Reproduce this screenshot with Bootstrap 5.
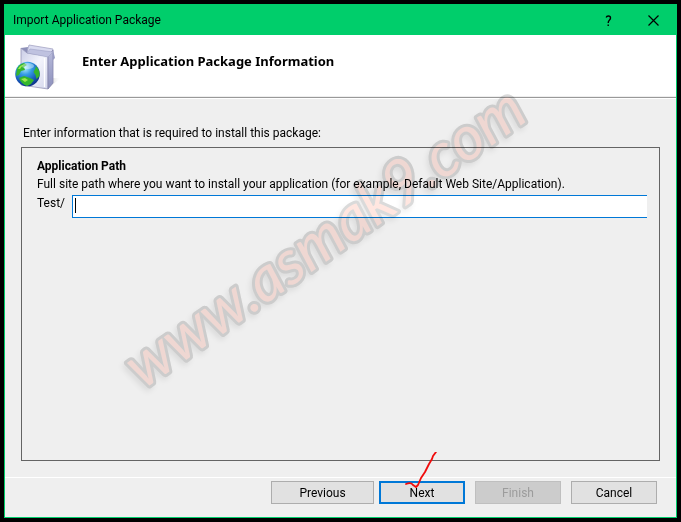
<!DOCTYPE html>
<html lang="en">
<head>
<meta charset="utf-8">
<meta name="viewport" content="width=device-width, initial-scale=1">
<title>Import Application Package</title>
<link href="https://cdn.jsdelivr.net/npm/bootstrap@5.3.0/dist/css/bootstrap.min.css" rel="stylesheet">
<style>
  body { background: #000; color: #000; padding: 4px; font: 12px/18px Roboto, "Open Sans", sans-serif; }
  .dialog { background: #efefef; border: 1px solid #00ce6b; overflow: hidden; }
  .titlebar { background: #00ce6b; height: 30px; padding-left: 8px; }
  .tool { width: 45px; height: 30px; border: 0; background: none; color: #000; padding: 0; }
  .banner { height: 64px; background: #fff; border-bottom: 1px solid #fff; box-shadow: inset 0 -1px #999, inset 0 -2px #eee; padding: 0 10px; gap: 20px; }
  .banner svg { margin-top: 5px; }
  .banner h1 { font: bold 13px/18px "Noto Sans", "Open Sans", sans-serif; padding-bottom: 11px; }
  .content { padding: 25px 16px 16px; }
  .lead-in { padding-left: 2px; }
  .panel { border: 1px solid #646464; padding: 9px 12px 12px 15px; margin-top: 5px; }
  .panel h2 { font: bold 12px/18px Roboto, "Open Sans", sans-serif; }
  .path { gap: 9px; }
  .path input { height: 23px; border: 1px solid #0078d7; border-right: 0; border-radius: 0; padding: 0 3px; background: #fff; min-width: 0; outline: 0; font: inherit; }
  .path .field { margin-top: 2px; }
  .path label { width: 26px; padding-top: 1px; }
  .caret { left: 3px; top: 3px; width: 1px; height: 15px; background: #000; }
  .actions { border-top: 1px solid #fff; padding: 3px 19px 13px; gap: 10px; }
  .actions .btn { width: 86px; height: 23px; padding: 0; border: 1px solid #adadad; border-radius: 0; background: #e1e1e1; color: #000; font: inherit; line-height: 22px; }
  .actions .btn-back { width: 103px; margin-right: -5px; }
  .actions .btn-next { border: 2px solid #0078d7; line-height: 20px; }
  .actions .btn:disabled { background: #ccc; border-color: #bfbfbf; color: #9c9c9c; opacity: 1; }
  .tick { left: 24px; top: -31px; width: 34px; height: 36px; pointer-events: none; }
  .stamp { left: 0; top: 0; width: 681px; height: 522px; pointer-events: none; mix-blend-mode: multiply; }
  .stamp text { font: italic 400 62px "Lato", sans-serif; stroke-linejoin: round; }
</style>
<script src="https://cdn.jsdelivr.net/npm/bootstrap@5.3.0/dist/js/bootstrap.bundle.min.js" defer></script>
</head>
<body class="min-vh-100 d-flex flex-column position-relative">
<main class="dialog flex-grow-1 d-flex flex-column">
  <header class="titlebar d-flex align-items-center">
    <span class="me-auto">Import Application Package</span>
    <button class="tool" type="button" aria-label="Help">
      <svg width="8" height="12" viewBox="0 0 8 12" fill="none" stroke="#000" stroke-width="1.4"><path d="M1.200 2.500Q1.600 1 3.400 1 5.500 1 5.500 3 5.500 4.200 4.300 5.200 3.200 6.100 3.200 8M3.200 9.400v1.500"/></svg>
    </button>
    <button class="tool" type="button" aria-label="Close">
      <svg width="11" height="11" viewBox="0 0 11 11" stroke="#000" stroke-width="1.200"><path d="M.5.5l10 10M10.500.5l-10 10"/></svg>
    </button>
  </header>

  <section class="banner d-flex align-items-center">
    <svg width="47" height="50" viewBox="0 0 47 50" aria-hidden="true">
      <defs>
        <linearGradient id="front" x1="0" x2="1" y2="1"><stop stop-color="#c9cce6"/><stop offset=".5" stop-color="#f3f4fc"/><stop offset="1" stop-color="#d3d6ec"/></linearGradient>
        <linearGradient id="side" x2="0" y2="1"><stop stop-color="#b9bcdc"/><stop offset="1" stop-color="#8c90bb"/></linearGradient>
        <radialGradient id="sea" cx=".4" cy=".25" r=".8"><stop stop-color="#b8efff"/><stop offset=".35" stop-color="#349ce4"/><stop offset=".75" stop-color="#1551b3"/><stop offset="1" stop-color="#0a2a78"/></radialGradient>
        <linearGradient id="shade"><stop stop-color="#777"/><stop offset="1" stop-color="#fff" stop-opacity="0"/></linearGradient>
      </defs>
      <path d="M32 45l14-11h-8l-6 3z" fill="url(#shade)" opacity=".6"/>
      <path d="M14 1l24 4-2 7-24-4z" fill="#d9dbf0" stroke="#a4a5c4" stroke-width=".8"/>
      <path d="M6 4l6 5 21 3v33L6 41z" fill="url(#front)" stroke="#9898b8" stroke-width=".8"/>
      <path d="M6 4l7-1-1 6z" fill="#8d90b8"/>
      <path d="M33 12l5-6v33l-5 6z" fill="url(#side)" stroke="#8585ad" stroke-width=".8"/>
      <path d="M12 9l3-4 23 3-5 5z" fill="#bfc2e0" stroke="#a0a3c6" stroke-width=".6"/>
      <path d="M29.500 14v29" stroke="#fff" stroke-width="1.3"/>
      <path d="M38 6l2 8-2 2z" fill="#9a9dc4"/>
      <circle cx="12.500" cy="30" r="12.300" fill="url(#sea)"/>
      <path d="M2 25q2-5 7-6l3 2-3 2 1 3-4 1-2 4-3 1zM21 22q4 4 3.500 10l-3 3-1-4-2-3 2-4zM4 34l5-2 6 2 4 2-3 4-4 2q-6-2-8-8z" fill="#35b62c"/>
      <path d="M3 25q2-4 5-4l-3 4zM6 35l4-1 3 2-3 2z" fill="#9be84e"/>
      <ellipse cx="13" cy="22" rx="6" ry="3" fill="#fff" opacity=".4"/>
    </svg>
    <h1 class="m-0">Enter Application Package Information</h1>
  </section>

  <section class="content flex-grow-1 d-flex flex-column">
    <p class="m-0 lead-in">Enter information that is required to install this package:</p>
    <div class="panel flex-grow-1">
      <h2 class="m-0">Application Path</h2>
      <p class="m-0">Full site path where you want to install your application (for example, Default Web Site/Application).</p>
      <div class="path d-flex align-items-start">
        <label for="site-path">Test/</label>
        <div class="field position-relative flex-grow-1 d-flex">
          <input id="site-path" class="w-100" type="text">
          <span class="caret position-absolute"></span>
        </div>
      </div>
    </div>
  </section>

  <footer class="actions d-flex justify-content-end">
    <button class="btn btn-back" type="button">Previous</button>
    <button class="btn btn-next position-relative" type="button">Next
      <svg class="tick position-absolute" viewBox="0 0 34 36" fill="none" stroke="#f00b0b" stroke-width="1.800" stroke-linecap="round" stroke-linejoin="round"><path d="M1 32q5-2 7 1l3 2 2-2 3-7 4-6 4-8 3-5 1-3 3-4"/></svg>
    </button>
    <button class="btn" type="button" disabled>Finish</button>
    <button class="btn" type="button">Cancel</button>
  </footer>
</main>

<svg class="stamp position-absolute" viewBox="0 0 681 522" aria-hidden="true">
  <defs>
    <filter id="soft" x="-10%" y="-30%" width="120%" height="160%"><feGaussianBlur stdDeviation="3"/></filter>
  </defs>
  <g transform="translate(143 390) rotate(-35)">
    <text x="-4" y="2" fill="#000" stroke="#000" stroke-width="4" opacity=".09" filter="url(#soft)">www.asmak9.com</text>
    <text fill="#dadada" stroke="#dadada" stroke-width="6">www.asmak9.com</text>
    <text fill="#ffe6e0">www.asmak9.com</text>
  </g>
</svg>
</body>
</html>
